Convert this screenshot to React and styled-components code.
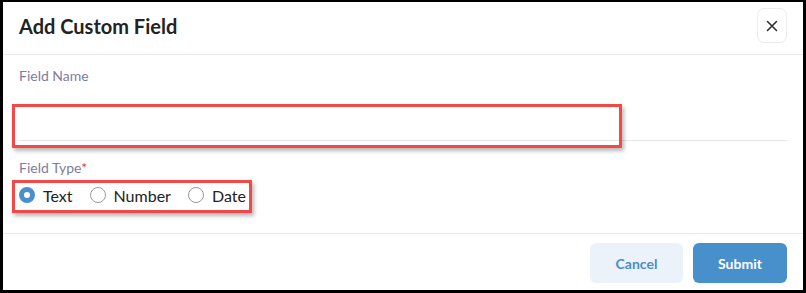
import React, { useState } from "react";
import styled, { createGlobalStyle } from "styled-components";

const Global = createGlobalStyle`
  html, body { margin: 0; padding: 0; background: #000; }
  body { font-family: Lato, "Open Sans", sans-serif; }
  * { box-sizing: border-box; }
`;

const Page = styled.div`
  width: 806px;
  height: 293px;
  padding: 2px 3px 3px 3px;
  background: #000;
`;

const Dialog = styled.div`
  position: relative;
  width: 800px;
  height: 288px;
  background: #fff;
  display: flex;
  flex-direction: column;
`;

const Header = styled.div`
  height: 53px;
  flex: none;
  display: flex;
  align-items: center;
  justify-content: space-between;
  padding: 0 16px 5px 16px;
  border-bottom: 1px solid #e9e9e9;
`;

const Title = styled.h2`
  margin: 0;
  font-size: 20px;
  font-weight: 700;
  color: #232323;
  letter-spacing: 0;
`;

const CloseButton = styled.button`
  width: 30px;
  height: 35px;
  padding: 0;
  border: 1px solid #ececec;
  border-radius: 7px;
  background: #fff;
  display: flex;
  align-items: center;
  justify-content: center;
  color: #333;
  cursor: pointer;
`;

const Body = styled.div`
  flex: 1;
  display: flex;
  flex-direction: column;
  padding: 12px 16px 0 16px;
`;

const Label = styled.label`
  display: block;
  font-size: 14px;
  line-height: 18px;
  color: #7f7c9f;
  margin-top: ${(p) => p.$gap || 0}px;
`;

const Required = styled.span`
  color: #e53935;
`;

const TextInput = styled.input`
  display: block;
  width: 100%;
  height: 56px;
  border: none;
  border-bottom: 1px solid #e7e7e7;
  outline: none;
  font-family: inherit;
  font-size: 15px;
  padding: 0;
  background: transparent;
`;

const RadioGroup = styled.div`
  display: flex;
  align-items: center;
  height: 24px;
  margin-top: 6px;
`;

const RadioOption = styled.label`
  display: flex;
  align-items: center;
  gap: 8px;
  margin-right: 17px;
  font-size: 16px;
  color: #222;
  cursor: pointer;
`;

const RadioCircle = styled.span`
  width: 16px;
  height: 16px;
  border-radius: 50%;
  border: ${(p) => (p.$checked ? "5px solid #4a8fcb" : "1.5px solid #9a9ca3")};
  background: #fff;
  flex: none;
`;

const Footer = styled.div`
  flex: none;
  height: 57px;
  border-top: 1px solid #e9e9e9;
  display: flex;
  justify-content: flex-end;
  align-items: flex-start;
  gap: 10px;
  padding: 9px 16px 7px 16px;
`;

const Button = styled.button`
  width: ${(p) => (p.$primary ? 94 : 93)}px;
  height: 40px;
  border: none;
  border-radius: 6px;
  font-family: inherit;
  font-size: 14px;
  font-weight: 700;
  cursor: pointer;
  background: ${(p) => (p.$primary ? "#4790cb" : "#ebf2f9")};
  color: ${(p) => (p.$primary ? "#fff" : "#4a8dc6")};
`;

const Highlight = styled.div`
  position: absolute;
  left: ${(p) => p.$x}px;
  top: ${(p) => p.$y}px;
  width: ${(p) => p.$w}px;
  height: ${(p) => p.$h}px;
  border: 3px solid #f24848;
  box-shadow: 2px 3px 4px rgba(0, 0, 0, 0.28);
  pointer-events: none;
`;

const XIcon = () => (
  <svg width="12" height="12" viewBox="0 0 12 12">
    <path d="M1.5 1.5 L10.5 10.5 M10.5 1.5 L1.5 10.5" stroke="#2f2f2f" strokeWidth="1.6" strokeLinecap="round" />
  </svg>
);

export default function App() {
  const [type, setType] = useState("Text");
  const options = ["Text", "Number", "Date"];
  return (
    <Page>
      <Global />
      <Dialog>
        <Header>
          <Title>Add Custom Field</Title>
          <CloseButton aria-label="Close">
            <XIcon />
          </CloseButton>
        </Header>
        <Body>
          <Label>Field Name</Label>
          <TextInput />
          <Label $gap={18}>
            Field Type<Required>*</Required>
          </Label>
          <RadioGroup>
            {options.map((o) => (
              <RadioOption key={o} onClick={() => setType(o)}>
                <RadioCircle $checked={type === o} />
                {o}
              </RadioOption>
            ))}
          </RadioGroup>
        </Body>
        <Footer>
          <Button>Cancel</Button>
          <Button $primary>Submit</Button>
        </Footer>
        <Highlight $x={9} $y={102} $w={610} $h={44} />
        <Highlight $x={9} $y={178} $w={240} $h={33} />
      </Dialog>
    </Page>
  );
}
